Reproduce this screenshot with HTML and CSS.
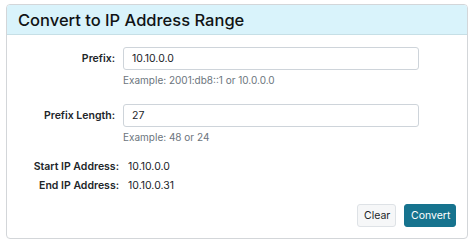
FILE: index.html
```html
<!DOCTYPE html>
<html lang="en">
<head>
    <meta charset="UTF-8">
    <title>Convert to IP Address Range</title>
    <link rel="stylesheet" href="styles.css">
</head>
<body>
    <div class="card">
        <div class="card-header">
            <h1>Convert to IP Address Range</h1>
        </div>
        <div class="card-body">
            <div class="form-row">
                <label for="prefix">Prefix:</label>
                <div class="field">
                    <input type="text" id="prefix" value="10.10.0.0">
                    <div class="help">Example: 2001:db8::1 or 10.0.0.0</div>
                </div>
            </div>
            <div class="form-row">
                <label for="prefixLength">Prefix Length:</label>
                <div class="field">
                    <input type="text" id="prefixLength" value="27">
                    <div class="help">Example: 48 or 24</div>
                </div>
            </div>
            <div class="result">
                <div class="result-label">Start IP Address:</div>
                <div class="result-value">10.10.0.0</div>
                <div class="result-label">End IP Address:</div>
                <div class="result-value">10.10.0.31</div>
            </div>
            <div class="actions">
                <button type="button" class="btn btn-light">Clear</button>
                <button type="button" class="btn btn-primary">Convert</button>
            </div>
        </div>
    </div>
</body>
</html>
```

FILE: styles.css
```css
body {
    margin: 0;
    padding: 4px 6px;
    font-family: Inter, "Liberation Sans", Arial, sans-serif;
    color: #212529;
    background-color: #ffffff;
}

.card {
    width: 462px;
    height: 235px;
    box-sizing: border-box;
    border: 1px solid #d3d6d9;
    border-radius: 4px;
    display: flex;
    flex-direction: column;
}

.card-header {
    height: 29px;
    background-color: #d9f3fb;
    border-bottom: 1px solid #c6dfe6;
    border-radius: 3px 3px 0 0;
    display: flex;
    align-items: center;
    padding-left: 11px;
}

h1 {
    margin: 0;
    font-size: 16.5px;
    font-weight: 500;
    color: #111315;
}

.card-body {
    flex: 1;
    padding: 12px 11px 11px 0;
    display: flex;
    flex-direction: column;
}

.form-row {
    display: grid;
    grid-template-columns: 108px 296px;
    column-gap: 8px;
    margin-bottom: 17px;
}

label {
    font-size: 10.5px;
    font-weight: 600;
    text-align: right;
    line-height: 23px;
}

input[type="text"] {
    display: block;
    width: 100%;
    height: 23px;
    box-sizing: border-box;
    border: 1px solid #ced4da;
    border-radius: 3px;
    padding: 0 8px;
    font-family: inherit;
    font-size: 10.5px;
    color: #212529;
}

.help {
    margin-top: 4px;
    font-size: 10px;
    line-height: 13px;
    color: #6c757d;
}

.result {
    display: grid;
    grid-template-columns: 112px auto;
    column-gap: 9px;
    font-size: 10.5px;
    line-height: 19px;
    margin-top: -4px;
}

.result-label {
    font-weight: 600;
    text-align: right;
}

.actions {
    margin-top: auto;
    display: flex;
    justify-content: flex-end;
    gap: 8px;
}

.btn {
    height: 23px;
    padding: 0 6px;
    border-radius: 3px;
    font-family: inherit;
    font-size: 10.5px;
    cursor: pointer;
}

.btn-light {
    width: 39px;
    background-color: #f6f7f8;
    border: 1px solid #dee2e6;
    color: #212529;
}

.btn-primary {
    width: 52px;
    background-color: #16738e;
    border: 1px solid #16738e;
    color: #ffffff;
}
```
